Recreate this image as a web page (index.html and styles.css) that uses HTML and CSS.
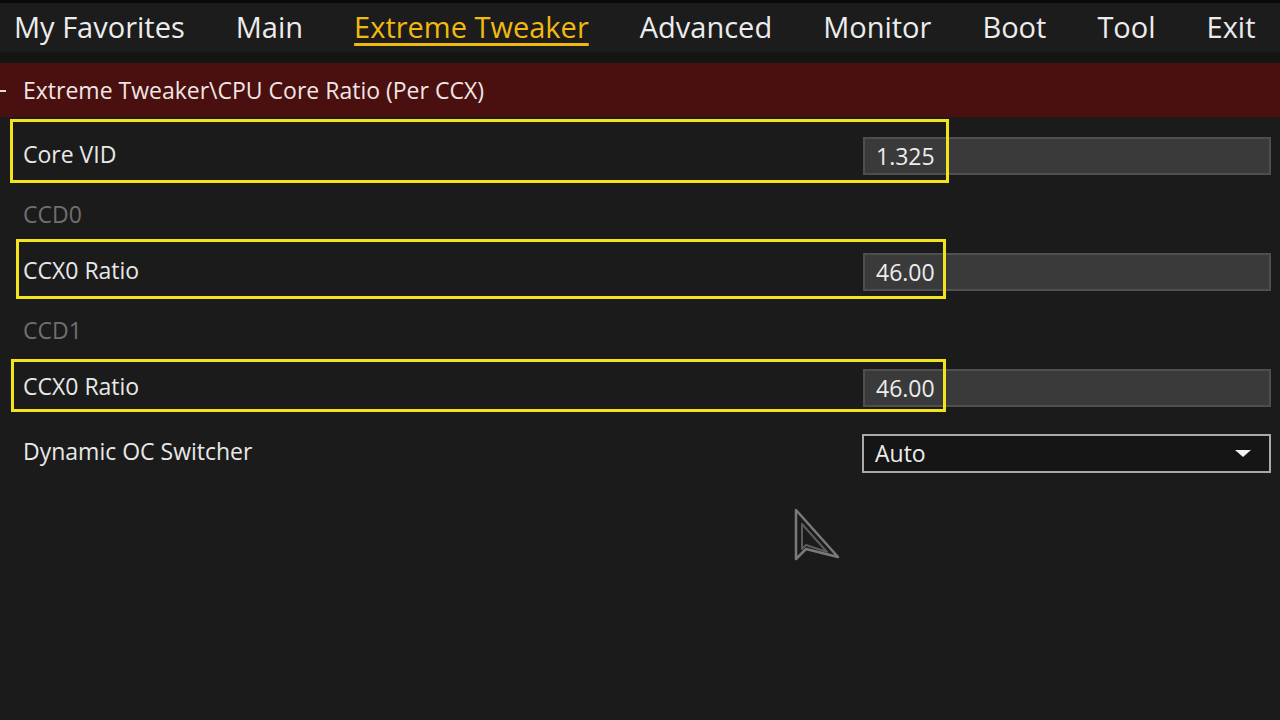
FILE: index.html
```html
<!DOCTYPE html>
<html lang="en">

<head>
    <meta charset="UTF-8">
    <meta name="viewport" content="width=device-width, initial-scale=1.0">
    <title>Extreme Tweaker</title>
    <link rel="stylesheet" href="styles.css">
</head>

<body>
    <div id="screen">
        <ul id="menu">
            <li>My Favorites</li>
            <li>Main</li>
            <li class="menu-selected">Extreme Tweaker</li>
            <li>Advanced</li>
            <li>Monitor</li>
            <li>Boot</li>
            <li>Tool</li>
            <li>Exit</li>
        </ul>

        <div id="crumb">
            <span class="crumb-dash"></span>
            <span>Extreme Tweaker\CPU Core Ratio (Per CCX)</span>
        </div>

        <div id="items">
            <div class="item">
                <span class="label">Core VID</span>
                <div class="field"><span class="value">1.325</span></div>
                <div class="mark mark-1"></div>
            </div>
            <div class="item group">CCD0</div>
            <div class="item">
                <span class="label">CCX0 Ratio</span>
                <div class="field"><span class="value">46.00</span></div>
                <div class="mark mark-2"></div>
            </div>
            <div class="item group">CCD1</div>
            <div class="item">
                <span class="label">CCX0 Ratio</span>
                <div class="field"><span class="value">46.00</span></div>
                <div class="mark mark-3"></div>
            </div>
            <div class="item item-last">
                <span class="label">Dynamic OC Switcher</span>
                <div class="select">
                    <span class="value">Auto</span>
                    <span class="caret"></span>
                </div>
            </div>
        </div>

        <!-- 鼠标指针 -->
        <svg id="pointer" width="48" height="56" viewBox="0 0 48 56">
            <polygon points="3,3 45,50 13,42 3,52" fill="none" stroke="#7a7a7a" stroke-width="2.5" stroke-linejoin="round"/>
            <polygon points="9,17 34,45 13,38 9,42" fill="none" stroke="#5c5c5c" stroke-width="2" stroke-linejoin="round"/>
        </svg>
    </div>
</body>

</html>
```

FILE: styles.css
```css
* {
    margin: 0;
    padding: 0;
}

body {
    background: #1b1b1b;
    font-family: "Open Sans", "Noto Sans", sans-serif;
    color: #e6e6e6;
}

#screen {
    position: relative;
    width: 1280px;
    height: 720px;
    overflow: hidden;
    background: #1b1b1b;
}

#menu {
    display: flex;
    align-items: center;
    gap: 51px;
    height: 49px;
    padding-left: 14px;
    border-top: 3px solid #0d0808;
    border-bottom: 11px solid #141414;
    background: #1c1c1c;
}

#menu li {
    list-style: none;
    font-size: 29px;
    color: #ececec;
    line-height: 36px;
    margin-top: -2px;
}

#menu .menu-selected {
    color: #f2b90f;
    text-decoration: underline;
    text-decoration-thickness: 3px;
    text-underline-offset: 5px;
}

#crumb {
    display: flex;
    align-items: center;
    gap: 17px;
    height: 54px;
    background: #4a0f0f;
    font-size: 23px;
    color: #f1e4e4;
}

.crumb-dash {
    width: 6px;
    height: 2px;
    background: #e8d8d8;
    margin-top: 2px;
}

#items {
    padding-top: 10px;
}

.item {
    position: relative;
    display: flex;
    align-items: center;
    justify-content: space-between;
    height: 58px;
    padding: 0 9px 0 23px;
    font-size: 23px;
}

.item-last {
    margin-top: 7px;
}

.group {
    color: #6f6f6f;
}

.label {
    color: #e8e8e8;
    margin-top: -4px;
}

.field {
    width: 404px;
    height: 34px;
    border: 2px solid #4f4f4f;
    background: #3a3a3a;
    display: flex;
    align-items: center;
}

.select {
    width: 405px;
    height: 35px;
    border: 2px solid #a9a9a9;
    background: #151515;
    display: flex;
    align-items: center;
    justify-content: space-between;
}

.value {
    padding-left: 11px;
    color: #ececec;
}

.caret {
    width: 0;
    height: 0;
    margin-right: 18px;
    border-left: 8px solid transparent;
    border-right: 8px solid transparent;
    border-top: 7px solid #f2f2f2;
}

/* 黄色标注框 */
.mark {
    position: absolute;
    border: 3px solid #f3e31c;
    pointer-events: none;
}

.mark-1 {
    left: 10px;
    top: -8px;
    width: 933px;
    height: 58px;
}

.mark-2 {
    left: 16px;
    top: -4px;
    width: 924px;
    height: 54px;
}

.mark-3 {
    left: 11px;
    top: 0;
    width: 929px;
    height: 47px;
}

#pointer {
    position: absolute;
    left: 793px;
    top: 507px;
}
```
